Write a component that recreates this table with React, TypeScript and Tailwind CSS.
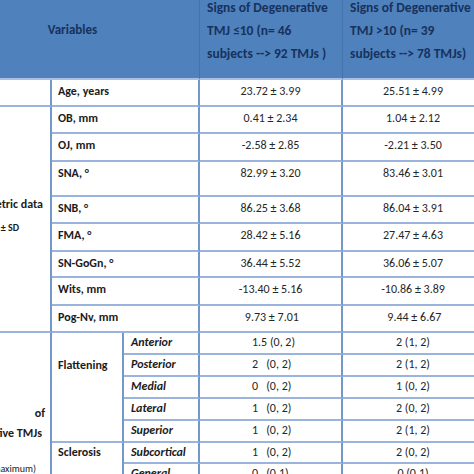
import React from 'react';

const ceph = [
  ['OB, mm', '0.41 ± 2.34', '1.04 ± 2.12'],
  ['OJ, mm', '-2.58 ± 2.85', '-2.21 ± 3.50'],
  ['SNA, °', '82.99 ± 3.20', '83.46 ± 3.01'],
  ['SNB, °', '86.25 ± 3.68', '86.04 ± 3.91'],
  ['FMA, °', '28.42 ± 5.16', '27.47 ± 4.63'],
  ['SN-GoGn, °', '36.44 ± 5.52', '36.06 ± 5.07'],
  ['Wits, mm', '-13.40 ± 5.16', '-10.86 ± 3.89'],
  ['Pog-Nv, mm', ' 9.73 ± 7.01', ' 9.44 ± 6.67'],
];

const flattening = [
  ['Anterior', '1.5 (0, 2)', '2 (1, 2)'],
  ['Posterior', '2   (0, 2)', '2 (1, 2)'],
  ['Medial', '0   (0, 2)', '1 (0, 2)'],
  ['Lateral', '1   (0, 2)', '2 (0, 2)'],
  ['Superior', '1   (0, 2)', '2 (1, 2)'],
];

const sclerosis = [
  ['Subcortical', '1   (0, 2)', '2 (0, 2)'],
  ['General', '0   (0,1)', '0 (0,1)'],
];

const hLine = 'border-b-2 border-b-[#9bb4dd]';
const vLine = 'border-r-2 border-r-[#7396cb]';

export default function App() {
  return (
    <div className="w-[474px] h-[474px] overflow-hidden bg-white text-[12px] text-[#1b1b1b]" style={{ fontFamily: 'Carlito, Lato, "Liberation Sans", sans-serif' }}>
      <div className="-ml-[54px] grid grid-cols-[106px_72px_76px_143px_140px] grid-rows-[80px_27px_27px_28px_35px_27px_28px_26px_28px_27px_22px_22px_22px_22px_22px_21px_22px] w-[537px]">
        {/* header */}
        <div className="col-start-1 col-span-3 bg-[#4f81bd] border-r border-r-[#4573ab] border-b-2 border-b-[#a9c0e4] pt-[18px] text-center leading-[23px] font-bold text-[13px] text-[#17325c]">
          Variables
        </div>
        <div className="col-start-4 bg-[#4f81bd] border-r border-r-[#4573ab] border-b-2 border-b-[#a9c0e4] pl-[7px] font-bold text-[13.5px] text-[#17325c] leading-[23px] whitespace-nowrap overflow-hidden">
          <div className="-mt-[4px]">
            <div>Signs of Degenerative</div>
            <div>TMJ ≤10 (n= 46</div>
            <div>subjects --&gt; 92 TMJs )</div>
          </div>
        </div>
        <div className="col-start-5 bg-[#4f81bd] border-b-2 border-b-[#a9c0e4] pl-[7px] font-bold text-[13.5px] text-[#17325c] leading-[23px] whitespace-nowrap overflow-hidden">
          <div className="-mt-[4px]">
            <div>Signs of Degenerative</div>
            <div>TMJ &gt;10 (n= 39</div>
            <div>subjects --&gt; 78 TMJs)</div>
          </div>
        </div>

        {/* age */}
        <div className={`col-start-1 ${vLine} ${hLine}`} />
        <div className={`col-start-2 col-span-2 ${vLine} ${hLine} pl-[6px] pt-[3px] leading-[16px] font-bold`}>Age, years</div>
        <div className={`col-start-4 ${vLine} ${hLine} pt-[3px] leading-[16px] text-center text-[#262626]`}>23.72 ± 3.99</div>
        <div className={`col-start-5 ${hLine} pt-[3px] leading-[16px] text-center text-[#262626]`}>25.51 ± 4.99</div>

        {/* cephalometric */}
        <div className={`col-start-1 row-span-8 ${vLine} ${hLine} pt-[86px] leading-[23px] font-bold whitespace-nowrap overflow-hidden`}>
          <div className="flex justify-end pr-[7px]">Cephalometric data</div>
          <div className="flex justify-end pr-[31px] text-[10px]">Mean ± SD</div>
        </div>
        {ceph.map(([label, a, b]) => (
          <React.Fragment key={label}>
            <div className={`col-start-2 col-span-2 ${vLine} ${hLine} pl-[6px] pt-[3px] leading-[16px] font-bold`}>{label}</div>
            <div className={`col-start-4 ${vLine} ${hLine} pt-[3px] leading-[16px] text-center text-[#262626] whitespace-pre`}>{a}</div>
            <div className={`col-start-5 ${hLine} pt-[3px] leading-[16px] text-center text-[#262626] whitespace-pre`}>{b}</div>
          </React.Fragment>
        ))}

        {/* degenerative */}
        <div className={`col-start-1 row-span-7 ${vLine} pt-[70px] leading-[20px] font-bold whitespace-nowrap overflow-hidden`}>
          <div className="flex justify-end pr-[5px]">of</div>
          <div className="flex justify-end pr-[8px]">degenerative TMJs</div>
          <div className="flex justify-end pr-[14px] mt-[16px] text-[10px] font-normal">(minimum, maximum)</div>
        </div>
        <div className={`col-start-2 row-span-5 ${vLine} ${hLine} pl-[6px] pt-[24px] leading-[16px] font-bold`}>Flattening</div>
        {flattening.map(([label, a, b]) => (
          <React.Fragment key={label}>
            <div className={`col-start-3 ${vLine} ${hLine} pl-[7px] pt-[1px] leading-[16px] font-bold italic`}>{label}</div>
            <div className={`col-start-4 ${vLine} ${hLine} pl-[52px] pt-[1px] leading-[16px] text-[#262626] whitespace-pre`}>{a}</div>
            <div className={`col-start-5 ${hLine} pt-[1px] leading-[16px] text-center text-[#262626] whitespace-pre`}>{b}</div>
          </React.Fragment>
        ))}
        <div className={`col-start-2 row-span-2 ${vLine} pl-[6px] pt-[1px] leading-[16px] font-bold`}>Sclerosis</div>
        {sclerosis.map(([label, a, b]) => (
          <React.Fragment key={label}>
            <div className={`col-start-3 ${vLine} ${hLine} pl-[7px] pt-[1px] leading-[16px] font-bold italic`}>{label}</div>
            <div className={`col-start-4 ${vLine} ${hLine} pl-[52px] pt-[1px] leading-[16px] text-[#262626] whitespace-pre`}>{a}</div>
            <div className={`col-start-5 ${hLine} pt-[1px] leading-[16px] text-center text-[#262626] whitespace-pre`}>{b}</div>
          </React.Fragment>
        ))}
      </div>
    </div>
  );
}
